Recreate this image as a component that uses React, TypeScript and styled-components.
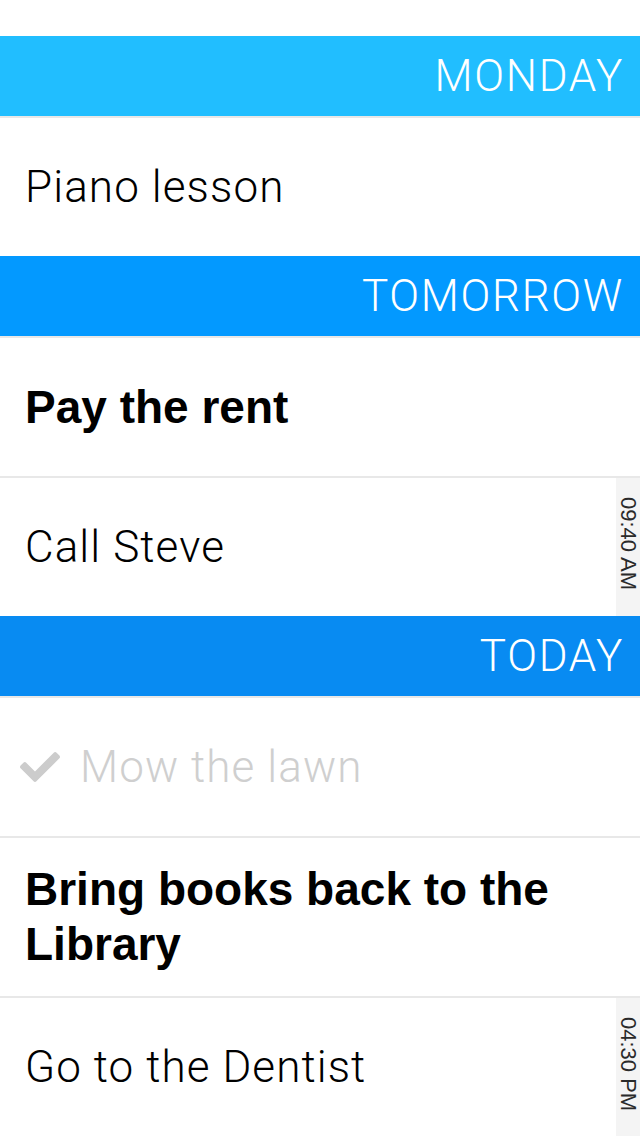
import React from "react";
import styled, { createGlobalStyle } from "styled-components";
import { FaCheck } from "react-icons/fa";

const Global = createGlobalStyle`
  html, body { margin: 0; padding: 0; background: #fff; }
  body { font-family: "Roboto", "Liberation Sans", sans-serif; -webkit-font-smoothing: antialiased; }
`;

const Screen = styled.div`
  width: 640px;
  min-height: 1136px;
  padding-top: 36px;
  box-sizing: border-box;
  background: #fff;
  overflow: hidden;
`;

const Header = styled.div<{ $bg: string }>`
  height: 80px;
  background: ${(p) => p.$bg};
  display: flex;
  align-items: center;
  justify-content: flex-end;
  padding-right: 16px;
  color: #fff;
  font-family: "Roboto", sans-serif;
  font-weight: 300;
  font-size: 44px;
  letter-spacing: 1.7px;
`;

const Row = styled.div`
  display: flex;
  border-top: 2px solid #e8e8e8;
  min-height: 138px;
`;

const Content = styled.div`
  flex: 1;
  display: flex;
  align-items: center;
  gap: 20px;
  padding: 24px 20px 24px 25px;
`;

const Title = styled.span<{ $bold?: boolean; $done?: boolean }>`
  font-family: ${(p) => (p.$bold ? '"Liberation Sans", Arial, sans-serif' : '"Roboto", sans-serif')};
  font-weight: ${(p) => (p.$bold ? 700 : 300)};
  font-size: ${(p) => (p.$bold ? "46px" : "44px")};
  letter-spacing: ${(p) => (p.$bold ? "0" : "1.1px")};
  line-height: 55px;
  color: ${(p) => (p.$done ? "#cfcfcf" : "#000")};
`;

const Check = styled(FaCheck)`
  color: #cccccc;
  font-size: 40px;
  flex: none;
  margin-left: -5px;
`;

const TimeCol = styled.div`
  width: 24px;
  flex: none;
  background: #f4f4f4;
  display: flex;
  justify-content: center;
  padding-top: 19px;
  box-sizing: border-box;
`;

const Time = styled.span`
  writing-mode: vertical-rl;
  font-family: "Liberation Sans", Arial, sans-serif;
  font-size: 22px;
  color: #2a2a2a;
  line-height: 24px;
`;

type Item = { title: string; bold?: boolean; done?: boolean; time?: string };
type Section = { label: string; bg: string; items: Item[] };

const sections: Section[] = [
  { label: "MONDAY", bg: "#21beff", items: [{ title: "Piano lesson" }] },
  {
    label: "TOMORROW",
    bg: "#0399ff",
    items: [{ title: "Pay the rent", bold: true }, { title: "Call Steve", time: "09:40 AM" }],
  },
  {
    label: "TODAY",
    bg: "#088bf2",
    items: [
      { title: "Mow the lawn", done: true },
      { title: "Bring books back to the Library", bold: true },
      { title: "Go to the Dentist", time: "04:30 PM" },
    ],
  },
];

export default function App() {
  return (
    <>
      <Global />
      <Screen>
        {sections.map((s) => (
          <React.Fragment key={s.label}>
            <Header $bg={s.bg}>{s.label}</Header>
            {s.items.map((it) => (
              <Row key={it.title}>
                <Content>
                  {it.done && <Check />}
                  <Title $bold={it.bold} $done={it.done}>
                    {it.title}
                  </Title>
                </Content>
                {it.time && (
                  <TimeCol>
                    <Time>{it.time}</Time>
                  </TimeCol>
                )}
              </Row>
            ))}
          </React.Fragment>
        ))}
      </Screen>
    </>
  );
}
